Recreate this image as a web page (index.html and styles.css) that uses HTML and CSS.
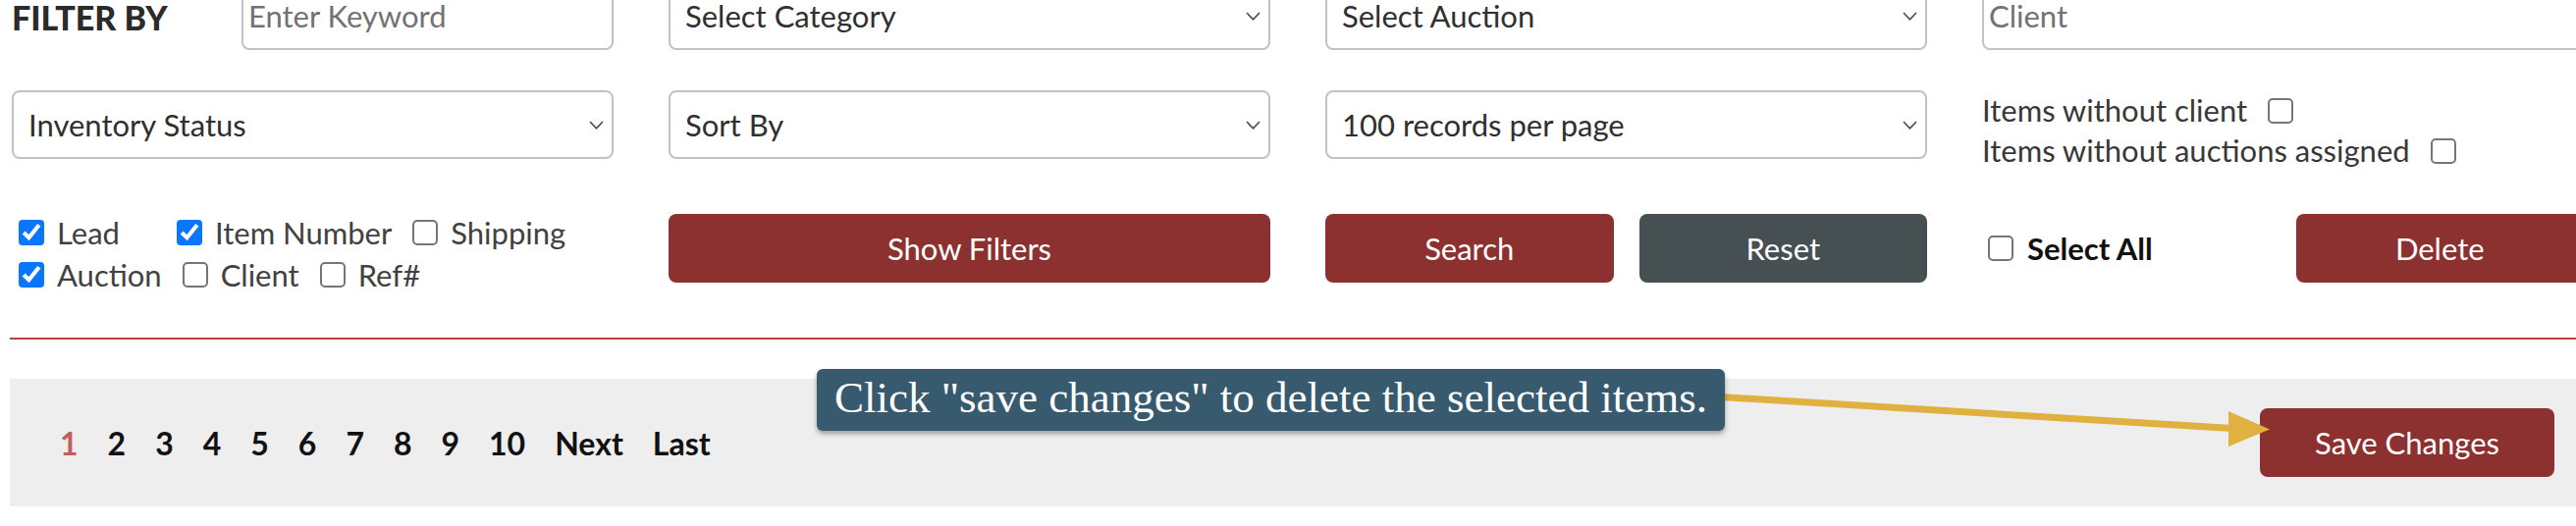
FILE: index.html
```html
<!DOCTYPE html>
<html>
<head>
<meta charset="utf-8">
<title>Inventory filters</title>
<link rel="stylesheet" href="styles.css">
</head>
<body>
<div class="page">
  <div class="filters">
    <div class="row">
      <div class="cell cell-keyword">
        <span class="filter-title">FILTER BY</span>
        <input class="field" type="text" placeholder="Enter Keyword">
      </div>
      <div class="cell">
        <div class="select"><span>Select Category</span><svg class="chev" width="15" height="9" viewBox="0 0 15 9"><polyline points="1,1 7.5,7.8 14,1"/></svg></div>
      </div>
      <div class="cell">
        <div class="select"><span>Select Auction</span><svg class="chev" width="15" height="9" viewBox="0 0 15 9"><polyline points="1,1 7.5,7.8 14,1"/></svg></div>
      </div>
      <div class="cell">
        <input class="field" type="text" placeholder="Client">
      </div>
    </div>

    <div class="row row-2">
      <div class="cell">
        <div class="select"><span>Inventory Status</span><svg class="chev" width="15" height="9" viewBox="0 0 15 9"><polyline points="1,1 7.5,7.8 14,1"/></svg></div>
      </div>
      <div class="cell">
        <div class="select"><span>Sort By</span><svg class="chev" width="15" height="9" viewBox="0 0 15 9"><polyline points="1,1 7.5,7.8 14,1"/></svg></div>
      </div>
      <div class="cell">
        <div class="select"><span>100 records per page</span><svg class="chev" width="15" height="9" viewBox="0 0 15 9"><polyline points="1,1 7.5,7.8 14,1"/></svg></div>
      </div>
      <div class="cell opts">
        <label class="opt">Items without client <input type="checkbox"></label>
        <label class="opt">Items without auctions assigned <input type="checkbox"></label>
      </div>
    </div>

    <div class="row row-3">
      <div class="cell checks">
        <div class="check-line">
          <label class="chk chk-first"><input type="checkbox" checked>Lead</label>
          <label class="chk"><input type="checkbox" checked>Item Number</label>
          <label class="chk"><input type="checkbox">Shipping</label>
        </div>
        <div class="check-line">
          <label class="chk chk-first"><input type="checkbox" checked>Auction</label>
          <label class="chk"><input type="checkbox">Client</label>
          <label class="chk"><input type="checkbox">Ref#</label>
        </div>
      </div>
      <div class="cell">
        <button class="btn btn-red btn-block">Show Filters</button>
      </div>
      <div class="cell pair">
        <button class="btn btn-red">Search</button>
        <button class="btn btn-grey">Reset</button>
      </div>
      <div class="cell pair">
        <label class="select-all"><input type="checkbox">Select All</label>
        <button class="btn btn-red">Delete</button>
      </div>
    </div>
  </div>

  <hr class="divider">

  <div class="pager-bar">
    <ul class="pager">
      <li class="current">1</li>
      <li>2</li>
      <li>3</li>
      <li>4</li>
      <li>5</li>
      <li>6</li>
      <li>7</li>
      <li>8</li>
      <li>9</li>
      <li>10</li>
      <li>Next</li>
      <li>Last</li>
    </ul>
    <button class="btn btn-red btn-save">Save Changes</button>
  </div>
</div>

<svg class="arrow" width="2624" height="536" viewBox="0 0 2624 536">
  <line x1="1745" y1="404" x2="2274" y2="436.5" />
  <polygon points="2270,419 2270,455 2312,437.5" />
</svg>
<div class="callout">Click "save changes" to delete the selected items.</div>
</body>
</html>
```

FILE: styles.css
```css
html, body {
  margin: 0;
  padding: 0;
}

body {
  width: 2624px;
  height: 536px;
  overflow: hidden;
  position: relative;
  background: #ffffff;
  font-family: Lato, "Liberation Sans", sans-serif;
  font-size: 31px;
  color: #333333;
}

.page {
  padding-left: 10px;
  width: 2633px;
  box-sizing: border-box;
}

.filters {
  margin-top: -19px;
  padding-left: 2px;
}

.row {
  display: grid;
  grid-template-columns: repeat(4, 613px);
  grid-auto-rows: 70px;
  column-gap: 56px;
}

.row-2 {
  margin-top: 41px;
}

.row-3 {
  margin-top: 56px;
}

.cell {
  min-width: 0;
}

.cell-keyword {
  display: flex;
  align-items: center;
}

.filter-title {
  flex: 0 0 234px;
  font-weight: 900;
  font-size: 34px;
  color: #2b2b2b;
  margin-top: 2px;
}

.field {
  box-sizing: border-box;
  width: 100%;
  height: 70px;
  border: 2px solid #c2c2c2;
  border-radius: 8px;
  padding: 0 5px;
  font-family: inherit;
  font-size: 31px;
  color: #333333;
  background: #ffffff;
  outline: none;
}

.field::placeholder {
  color: #727272;
}

.select {
  box-sizing: border-box;
  height: 70px;
  border: 2px solid #c2c2c2;
  border-radius: 8px;
  padding: 0 8px 0 15px;
  display: flex;
  align-items: center;
  justify-content: space-between;
  color: #2f2f2f;
  background: #ffffff;
}

.chev polyline {
  fill: none;
  stroke: #4a4a4a;
  stroke-width: 1.6;
}

.opts {
  line-height: 41px;
  color: #383838;
}

.opt {
  display: flex;
  align-items: center;
  gap: 21px;
}

input[type="checkbox"] {
  zoom: 2;
  width: 13px;
  height: 13px;
  margin: 0;
  accent-color: #0a76ff;
  flex: 0 0 auto;
}

.checks {
  margin-top: -3px;
  color: #414141;
}

.check-line {
  display: flex;
  align-items: center;
  height: 43px;
  gap: 21px;
  padding-left: 7px;
}

.chk {
  display: flex;
  align-items: center;
  gap: 13px;
}

.chk-first {
  min-width: 140px;
}

.btn {
  height: 70px;
  border: 0;
  border-radius: 8px;
  color: #ffffff;
  font-family: inherit;
  font-size: 31px;
  padding: 0;
  cursor: pointer;
}

.btn-block {
  width: 100%;
}

.btn-red {
  background: #8d3030;
}

.btn-grey {
  background: #465053;
}

.pair {
  display: grid;
  grid-template-columns: 1fr 1fr;
  column-gap: 26px;
}

.select-all {
  display: flex;
  align-items: center;
  gap: 14px;
  padding-left: 6px;
  font-weight: 700;
  color: #111111;
}

.divider {
  border: 0;
  height: 2px;
  margin: 56px 0 0;
  background: #b5413f;
}

.pager-bar {
  margin-top: 40px;
  height: 130px;
  background: #eeeeee;
  display: flex;
  align-items: center;
  justify-content: space-between;
  padding: 0 31px 0 51px;
}

.pager {
  list-style: none;
  margin: 0;
  padding: 0;
  display: flex;
  gap: 30px;
  font-size: 32px;
  font-weight: 700;
  color: #111111;
}

.pager .current {
  color: #c0605e;
}

.btn-save {
  width: 300px;
}

.arrow {
  position: absolute;
  left: 0;
  top: 0;
  pointer-events: none;
}

.arrow line {
  stroke: #e0b040;
  stroke-width: 7;
}

.arrow polygon {
  fill: #e0b040;
}

.callout {
  position: absolute;
  left: 832px;
  top: 376px;
  height: 45px;
  padding: 7px 18px 11px 18px;
  background: #385a6e;
  color: #ffffff;
  border-radius: 6px;
  box-shadow: 0 3px 5px rgba(0, 0, 0, 0.35);
  font-family: "Liberation Serif", "Times New Roman", serif;
  font-size: 45px;
  line-height: 45px;
  white-space: nowrap;
}
```
